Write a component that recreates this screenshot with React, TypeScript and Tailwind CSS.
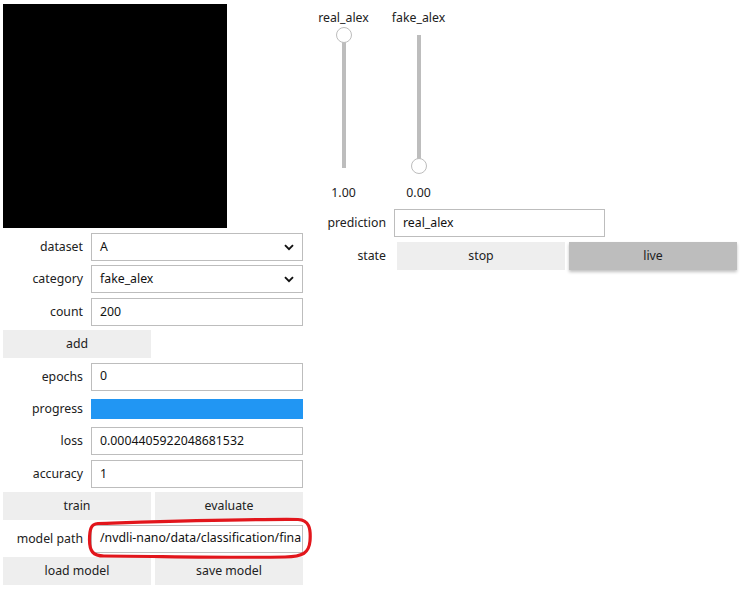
import React from "react";

const font = { fontFamily: '"Noto Sans", "Open Sans", sans-serif' };

function Chevron() {
  return (
    <svg width="10" height="7" viewBox="0 0 10 7" className="shrink-0">
      <path d="M1 1.2 L5 5.2 L9 1.2" fill="none" stroke="#111" strokeWidth="1.9" />
    </svg>
  );
}

function Row({ label, children }: { label: string; children: React.ReactNode }) {
  return (
    <div className="flex h-[28px] items-center">
      <div className="w-[80px] shrink-0 text-right leading-[18px] text-[#212121]">{label}</div>
      <div className="ml-[8px] flex h-full">{children}</div>
    </div>
  );
}

function Input({ value, w = 212 }: { value: string; w?: number }) {
  return (
    <div
      className={`flex h-[28px] items-center overflow-hidden whitespace-nowrap border border-[#bdbdbd] bg-white pl-[8px] text-[#111] ${
        w === 212 ? "w-[212px]" : "w-[211px]"
      }`}
    >
      {value}
    </div>
  );
}

function Select({ value }: { value: string }) {
  return (
    <div className="flex h-[28px] w-[212px] items-center justify-between border border-[#bdbdbd] bg-white pl-[8px] pr-[8px] text-[#111]">
      <span>{value}</span>
      <Chevron />
    </div>
  );
}

function Btn({ label, w = "w-[148px]", active = false }: { label: string; w?: string; active?: boolean }) {
  return (
    <div
      className={`flex h-[28px] items-center justify-center text-[#212121] ${w} ${
        active ? "bg-[#bdbdbd] shadow-[0_2px_3px_rgba(0,0,0,0.25)]" : "bg-[#eeeeee]"
      }`}
    >
      {label}
    </div>
  );
}

function VSlider({ label, value, top }: { label: string; value: string; top: boolean }) {
  return (
    <div className="flex w-[75px] flex-col items-center">
      <div className="h-[18px] leading-[18px] text-[#212121]">{label}</div>
      <div className="relative h-[150px] w-[16px]">
        <div className="absolute left-[6px] top-[8px] h-[133px] w-[4px] bg-[#bdbdbd]" />
        <div
          className={`absolute left-0 h-[16px] w-[16px] rounded-full border border-[#bdbdbd] bg-white ${
            top ? "top-0" : "top-[131px]"
          }`}
        />
      </div>
      <div className="mt-[7px] h-[18px] leading-[18px] text-[#212121]">{value}</div>
    </div>
  );
}

export default function App() {
  return (
    <div className="relative h-[590px] w-[743px] bg-white text-[12.3px]" style={font}>
      <div className="flex">
        <div className="flex w-[303px] flex-col pl-[3px] pt-[4px]">
          <div className="h-[224px] w-[224px] bg-black" />
          <div className="mt-[5px] flex flex-col gap-[4.4px]">
            <Row label="dataset">
              <Select value="A" />
            </Row>
            <Row label="category">
              <Select value="fake_alex" />
            </Row>
            <Row label="count">
              <Input value="200" />
            </Row>
            <div className="flex">
              <Btn label="add" />
            </div>
            <Row label="epochs">
              <Input value="0" />
            </Row>
            <Row label="progress">
              <div className="flex h-full items-center">
                <div className="h-[20px] w-[212px] bg-[#2196f3]" />
              </div>
            </Row>
            <Row label="loss">
              <Input value="0.0004405922048681532" />
            </Row>
            <Row label="accuracy">
              <Input value="1" />
            </Row>
            <div className="flex gap-[4px]">
              <Btn label="train" />
              <Btn label="evaluate" />
            </div>
            <Row label="model path">
              <Input value="/nvdli-nano/data/classification/fina" />
            </Row>
            <div className="flex gap-[4px]">
              <Btn label="load model" />
              <Btn label="save model" />
            </div>
          </div>
        </div>

        <div className="ml-[3px] flex flex-col pt-[9px]">
          <div className="flex">
            <VSlider label="real_alex" value="1.00" top={true} />
            <VSlider label="fake_alex" value="0.00" top={false} />
          </div>
          <div className="mt-[7px]">
            <Row label="prediction">
              <Input value="real_alex" w={211} />
            </Row>
          </div>
          <div className="mt-[5px] flex h-[28px] items-center">
            <div className="w-[80px] text-right leading-[18px] text-[#212121]">state</div>
            <div className="ml-[11px] flex gap-[4px]">
              <Btn label="stop" w="w-[168px]" />
              <Btn label="live" w="w-[168px]" active={true} />
            </div>
          </div>
        </div>
      </div>

      <svg
        className="pointer-events-none absolute left-0 top-0"
        width="743"
        height="590"
        viewBox="0 0 743 590"
      >
        <path
          d="M 98 523.5 C 150 522, 240 519, 298 519.5 C 309 520, 311 528, 310 541 C 309 553, 303 556.5, 285 557 C 220 558, 150 556, 104 556 C 93 556, 89.5 551, 89.5 540 C 89.5 529, 91 524, 98 523.5 Z"
          fill="none"
          stroke="#e2161c"
          strokeWidth="3.2"
          strokeLinejoin="round"
        />
      </svg>
    </div>
  );
}
